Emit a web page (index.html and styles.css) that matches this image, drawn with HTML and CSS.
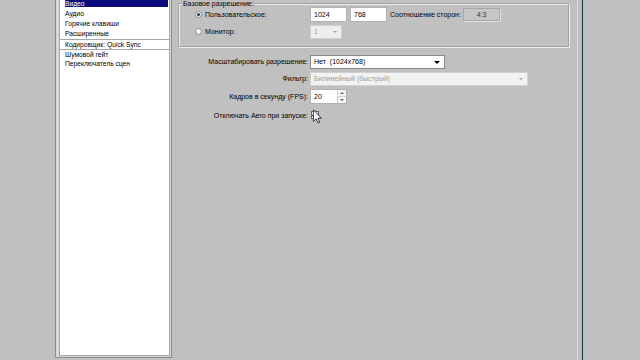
FILE: index.html
```html
<!DOCTYPE html>
<html lang="ru">
<head>
    <meta charset="UTF-8">
    <title>Настройки - Видео</title>
    <link rel="stylesheet" href="styles.css">
</head>
<body>
<div class="screen">
    <div class="gutter"></div>

    <!-- Список разделов -->
    <div class="sidebar">
        <ul class="list">
            <li class="active">Видео</li>
            <li>Аудио</li>
            <li>Горячие клавиши</li>
            <li>Расширенные</li>
            <li class="sep">Кодировщик: Quick Sync</li>
            <li class="sep">Шумовой гейт</li>
            <li>Переключатель сцен</li>
        </ul>
    </div>

    <!-- Настройки видео -->
    <div class="main">
        <div class="group">
            <div class="group-title">Базовое разрешение:</div>
            <div class="grow">
                <span class="radio checked"></span>
                <span class="glabel">Пользовательское:</span>
                <div class="input">1024</div>
                <div class="input">768</div>
                <span class="ratio-label">Соотношение сторон:</span>
                <div class="ratio">4:3</div>
            </div>
            <div class="grow">
                <span class="radio"></span>
                <span class="glabel">Монитор:</span>
                <div class="select disabled small">1<span class="arrow"></span></div>
            </div>
        </div>

        <div class="frow">
            <span class="flabel">Масштабировать разрешение:</span>
            <div class="select scale">Нет&nbsp;&nbsp;(1024x768)<span class="arrow"></span></div>
        </div>
        <div class="frow">
            <span class="flabel">Фильтр:</span>
            <div class="select disabled filter">Билинейный (быстрый)<span class="arrow"></span></div>
        </div>
        <div class="frow fps">
            <span class="flabel">Кадров в секунду (FPS):</span>
            <div class="input spin">20
                <span class="spin-btns"><span class="up"></span><span class="down"></span></span>
            </div>
        </div>
        <div class="frow aero">
            <span class="flabel">Отключать Aero при запуске:</span>
            <span class="check"></span>
            <!-- курсор мыши -->
            <svg class="cursor" width="9" height="15" viewBox="0 0 12 19">
                <path d="M0.5 0.5 L0.5 16 L4.2 12.6 L6.8 18.3 L9 17.3 L6.5 11.8 L11.2 11.8 Z" fill="#fff" stroke="#000" stroke-width="1"/>
            </svg>
        </div>
    </div>

    <div class="edge"></div>
</div>
</body>
</html>
```

FILE: styles.css
```css
* {
    box-sizing: border-box;
    margin: 0;
    padding: 0;
}
body {
    font-family: 'Liberation Sans', Arial, sans-serif;
    font-size: 7px;
    color: #000;
    background-color: #c0c0c0;
    width: 640px;
    height: 360px;
    overflow: hidden;
}
.screen {
    display: flex;
    height: 360px;
}
.gutter {
    width: 55px;
}

/* Sidebar list */
.sidebar {
    width: 117px;
    height: 358px;
    border: 1px solid #8c8c8c;
    border-top: none;
    background-color: #d6d6d6;
    padding: 0 1px 1px 3px;
}
.list {
    list-style: none;
    height: 100%;
    background-color: #ffffff;
    border: 1px solid #a8a8a8;
    border-top: none;
    padding: 0 1px 0 2px;
    font-size: 6.7px;
    overflow: hidden;
}
.list li {
    height: 10px;
    line-height: 10px;
    padding-left: 3px;
    white-space: nowrap;
}
.list li:first-child {
    margin-top: -1px;
}
.list .active {
    height: 10px;
    padding-bottom: 2px;
    background-color: #0a0a7c;
    background-clip: content-box;
    color: #ffffff;
}
.list .sep {
    border-top: 1px solid #a6a6a6;
    line-height: 9px;
    margin: 0 -1px 0 -2px;
    padding-left: 5px;
}

/* Main panel */
.main {
    width: 406px;
    border-right: 1px solid #dcdcdc;
    padding: 0 8px 0 6px;
}
.group {
    position: relative;
    margin-top: 3px;
    border: 1px solid #a2a2a2;
    box-shadow: inset 1px 1px 0 #ececec, 1px 1px 0 #ececec;
    padding: 2px 0 6px;
}
.group-title {
    position: absolute;
    top: -4px;
    left: 3px;
    padding: 0 1px;
    line-height: 8px;
    background-color: #c0c0c0;
}
.grow {
    display: flex;
    align-items: center;
    height: 17px;
    padding-left: 16px;
}
.radio {
    width: 7px;
    height: 7px;
    border-radius: 50%;
    border: 1px solid #8a8a8a;
    background-color: #f4f4f4;
    display: flex;
    justify-content: center;
    align-items: center;
}
.radio.checked::after {
    content: '';
    width: 3px;
    height: 3px;
    border-radius: 50%;
    background-color: #1a3a5a;
}
.glabel {
    width: 108px;
    padding-left: 3px;
}
.input {
    position: relative;
    width: 37px;
    height: 15px;
    line-height: 13px;
    padding-left: 3px;
    background-color: #ffffff;
    border: 1px solid #b0b0b0;
    margin-right: 3px;
}
.ratio-label {
    width: 73px;
    white-space: nowrap;
}
.ratio {
    width: 37px;
    height: 13px;
    line-height: 11px;
    text-align: center;
    color: #333;
    background-color: #c6c6c6;
    border: 1px solid #a6a6a6;
    box-shadow: 1px 1px 0 #e4e4e4;
}

/* Selects */
.select {
    position: relative;
    height: 14px;
    line-height: 12px;
    padding-left: 3px;
    background-color: #ffffff;
    border: 1px solid #8a8a8a;
    white-space: nowrap;
}
.select .arrow {
    position: absolute;
    right: 4px;
    top: 5px;
    border-left: 3px solid transparent;
    border-right: 3px solid transparent;
    border-top: 3px solid #000;
}
.select.disabled {
    color: #9a9a9a;
    background-color: #eeeeee;
    border-color: #d0d0d0;
}
.select.disabled .arrow {
    border-top-color: #a0a0a0;
    border-left-width: 2px;
    border-right-width: 2px;
    border-top-width: 2px;
}
.select.small {
    width: 32px;
}
.select.scale {
    width: 135px;
}
.select.filter {
    width: 218px;
    background-color: #f2f2f2;
}

/* Form rows */
.frow {
    position: relative;
    display: flex;
    align-items: center;
    height: 17px;
}
.group + .frow {
    margin-top: 6px;
}
.frow.fps {
    height: 18px;
}
.frow.aero {
    height: 20px;
}
.flabel {
    width: 132px;
    padding-right: 2px;
    text-align: right;
    white-space: nowrap;
}
.spin {
    margin-right: 0;
}
.spin-btns {
    position: absolute;
    right: 0;
    top: 0;
    width: 9px;
    height: 13px;
    display: flex;
    flex-direction: column;
    border-left: 1px solid #d0d0d0;
    background-color: #f4f4f4;
}
.spin-btns span {
    flex: 1;
    display: flex;
    justify-content: center;
    align-items: center;
}
.spin-btns .up {
    border-bottom: 1px solid #d0d0d0;
}
.spin-btns .up::after {
    content: '';
    border-left: 2px solid transparent;
    border-right: 2px solid transparent;
    border-bottom: 2px solid #606060;
}
.spin-btns .down::after {
    content: '';
    border-left: 2px solid transparent;
    border-right: 2px solid transparent;
    border-top: 2px solid #606060;
}
.check {
    position: relative;
    width: 8px;
    height: 8px;
    margin-left: 1px;
    border: 1px solid #5a6a7a;
    background-color: #e8eef4;
}
.check::after {
    content: '';
    position: absolute;
    left: 1px;
    top: 0;
    width: 2px;
    height: 4px;
    border-right: 1px solid #1a2a4a;
    border-bottom: 1px solid #1a2a4a;
    transform: rotate(40deg);
}
.cursor {
    position: absolute;
    left: 135px;
    top: 4px;
}

/* Window edge */
.edge {
    width: 5px;
    border-right: 1px solid #1d3a44;
    box-shadow: inset -1px 0 0 #8fc0c8;
}
```
